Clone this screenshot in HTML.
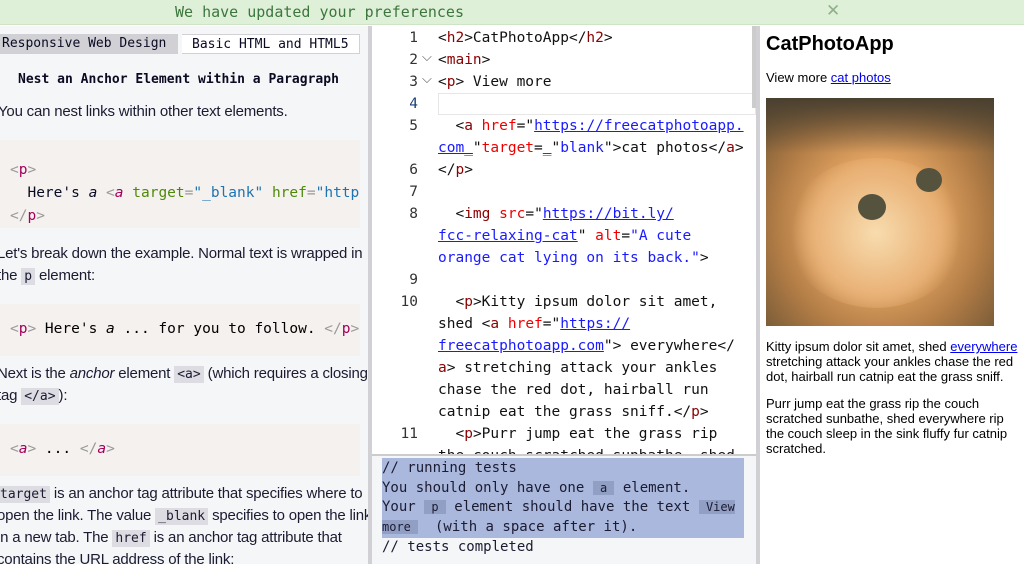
<!DOCTYPE html>
<html><head><meta charset="utf-8"><style>
*{margin:0;padding:0;box-sizing:border-box}
body{width:1024px;height:564px;overflow:hidden;background:#fff;position:relative;font-family:"Liberation Sans",sans-serif}
.abs{position:absolute}
#bar{left:0;top:0;width:1024px;height:25px;background:#dff0d8;border-bottom:1px solid #cfe3c6}
#bar .t{left:175px;top:3px;font:15px "DejaVu Sans Mono",monospace;color:#3c763d}
#bar .x{left:826px;top:1px;font:bold 17px "DejaVu Sans",sans-serif;color:#8fb08a}
#left{left:0;top:26px;width:368px;height:538px;background:#f5f6f7;overflow:hidden}
#sb{left:368px;top:26px;width:4px;height:538px;background:#d0d0d5}
.crumb{top:8px;height:20px;font:13px "DejaVu Sans Mono",monospace;color:#0a0a23;line-height:20px}
.p{font:15px "Liberation Sans",sans-serif;color:#1b1b32;left:0;white-space:nowrap;letter-spacing:-0.2px}
.code{left:0;width:360px;background:#f5f1ee}
.mono{font-family:"DejaVu Sans Mono",monospace}
.ic{background:#dcdce2;font:13px "DejaVu Sans Mono",monospace;padding:1px 3px;letter-spacing:0}
.tag{color:#999}.tn{color:#a3005a}.at{color:#4e8a08}.st{color:#1d74b3}
#ed{left:372px;top:26px;width:384px;height:428px;background:#fff;overflow:hidden}
.ln{position:absolute;left:0;width:46px;text-align:right;font:14.5px "DejaVu Sans Mono",monospace;color:#333;line-height:21.9px}
.cl{position:absolute;left:66px;font:14.5px "DejaVu Sans Mono",monospace;color:#111;white-space:pre;line-height:21.9px}
.r{color:#8b0000}.rd{color:#e00}.b{color:#1a1aff}.u{text-decoration:underline}
#div{left:756px;top:26px;width:4px;height:538px;background:#d0d0d5}
#tests{left:372px;top:454px;width:384px;height:110px;background:#f5f6f7;border-top:2px solid #ccc}
.tl{position:absolute;left:10px;font:14px "DejaVu Sans Mono",monospace;color:#1b1b32;white-space:pre}
.hl{background:#aab8dd}
.ti{background:#929fc4;font-size:12px}
#pv{left:760px;top:26px;width:264px;height:538px;background:#fff}
</style></head><body>
<div id="bar" class="abs"><div class="abs t">We have updated your preferences</div><div class="abs x">✕</div></div>

<div id="left" class="abs">
 <div class="abs crumb" style="left:0;width:178px;background:#d0d0d5;padding-left:2px">Responsive Web Design</div>
 <div class="abs" style="left:170px;top:8px;width:0;height:0;border-top:10px solid transparent;border-bottom:10px solid transparent;border-left:8px solid #d0d0d5"></div>
 <div class="abs crumb" style="left:182px;width:178px;border:1px solid #d0d0d5;border-left:none;padding-left:10px;background:#fff">Basic HTML and HTML5</div>
 <div class="abs mono" style="left:18px;top:46px;font-size:13px;font-weight:bold;color:#0a0a23">Nest an Anchor Element within a Paragraph</div>
 <div class="abs p" style="top:77px;left:-2px">You can nest links within other text elements.</div>
 <div class="abs code" style="top:114px;height:88px"></div>
 <div class="abs mono" style="left:10px;top:133px;font-size:14.5px;line-height:23px;white-space:pre"><span class="tag">&lt;</span><span class="tn">p</span><span class="tag">&gt;</span>
  <span style="color:#0a0a23">Here's <i>a</i></span> <span class="tag">&lt;</span><span class="tn"><i>a</i></span> <span class="at">target</span><span class="tag">=</span><span class="st">"_blank"</span> <span class="at">href</span><span class="tag">=</span><span class="st">"http</span>
<span class="tag">&lt;/</span><span class="tn">p</span><span class="tag">&gt;</span></div>
 <div class="abs p" style="top:219px;left:-3px">Let's break down the example. Normal text is wrapped in</div>
 <div class="abs p" style="top:241px;left:-3px">the <span class="ic">p</span> element:</div>
 <div class="abs code" style="top:278px;height:52px"></div>
 <div class="abs mono" style="left:10px;top:295px;font-size:14.5px;white-space:pre"><span class="tag">&lt;</span><span class="tn">p</span><span class="tag">&gt;</span> Here's <i>a</i> ... for you to follow. <span class="tag">&lt;/</span><span class="tn">p</span><span class="tag">&gt;</span></div>
 <div class="abs p" style="top:339px;left:-3px">Next is the <i>anchor</i> element <span class="ic">&lt;a&gt;</span> (which requires a closing</div>
 <div class="abs p" style="top:361px;left:-3px">tag <span class="ic">&lt;/a&gt;</span>):</div>
 <div class="abs code" style="top:398px;height:52px"></div>
 <div class="abs mono" style="left:10px;top:415px;font-size:14.5px;white-space:pre"><span class="tag">&lt;</span><span class="tn"><i>a</i></span><span class="tag">&gt;</span> ... <span class="tag">&lt;/</span><span class="tn"><i>a</i></span><span class="tag">&gt;</span></div>
 <div class="abs p" style="top:459px;left:-3px"><span class="ic">target</span> is an anchor tag attribute that specifies where to</div>
 <div class="abs p" style="top:481px;left:-3px">open the link. The value <span class="ic">_blank</span> specifies to open the link</div>
 <div class="abs p" style="top:503px;left:-3px">in a new tab. The <span class="ic">href</span> is an anchor tag attribute that</div>
 <div class="abs p" style="top:525px;left:-3px">contains the URL address of the link:</div>
</div>
<div id="sb" class="abs"></div>

<div id="ed" class="abs">
 <div class="ln" style="top:2px">1</div><div class="cl" style="top:2px">&lt;<span class="r">h2</span>&gt;CatPhotoApp&lt;/<span class="r">h2</span>&gt;</div>
 <div class="ln" style="top:24px">2</div><div class="abs" style="left:50px;top:23px;font-size:13px;color:#555">⌵</div><div class="cl" style="top:24px">&lt;<span class="r">main</span>&gt;</div>
 <div class="ln" style="top:46px">3</div><div class="abs" style="left:50px;top:45px;font-size:13px;color:#555">⌵</div><div class="cl" style="top:46px">&lt;<span class="r">p</span>&gt; View more</div>
 <div class="ln" style="top:68px;color:#1a3f7a">4</div><div class="abs" style="left:66px;top:67px;width:318px;height:22px;border:1px solid #e6e6e6"></div>
 <div class="ln" style="top:90px">5</div><div class="cl" style="top:90px">  &lt;<span class="r">a</span> <span class="rd">href</span>="<span class="b u">https://freecatphotoapp.</span>
<span class="b u">com_</span>"<span class="rd">target</span>=<span class="rd u">_</span>"<span class="b">blank</span>"&gt;cat photos&lt;/<span class="r">a</span>&gt;</div>
 <div class="ln" style="top:134px">6</div><div class="cl" style="top:134px">&lt;/<span class="r">p</span>&gt;</div>
 <div class="ln" style="top:156px">7</div>
 <div class="ln" style="top:178px">8</div><div class="cl" style="top:178px">  &lt;<span class="r">img</span> <span class="rd">src</span>="<span class="b u">https://bit.ly/</span>
<span class="b u">fcc-relaxing-cat</span>" <span class="rd">alt</span>=<span class="b">"A cute</span>
<span class="b">orange cat lying on its back."</span>&gt;</div>
 <div class="ln" style="top:244px">9</div>
 <div class="ln" style="top:266px">10</div><div class="cl" style="top:266px">  &lt;<span class="r">p</span>&gt;Kitty ipsum dolor sit amet,
shed &lt;<span class="r">a</span> <span class="rd">href</span>="<span class="b u">https://</span>
<span class="b u">freecatphotoapp.com</span>"&gt; everywhere&lt;/
<span class="r">a</span>&gt; stretching attack your ankles
chase the red dot, hairball run
catnip eat the grass sniff.&lt;/<span class="r">p</span>&gt;</div>
 <div class="ln" style="top:398px">11</div><div class="cl" style="top:398px">  &lt;<span class="r">p</span>&gt;Purr jump eat the grass rip
the couch scratched sunbathe, shed</div>
 <div class="abs" style="right:0;top:0;width:4px;height:82px;background:#ccc"></div>
</div>

<div id="tests" class="abs">
 <div class="abs hl" style="left:10px;top:2px;width:362px;height:80px"></div>
 <div class="tl" style="top:4px">// running tests</div>
 <div class="tl" style="top:24px">You should only have one <span class="ti"> a </span> element.</div>
 <div class="tl" style="top:43px">Your <span class="ti"> p </span> element should have the text <span class="ti"> View</span></div>
 <div class="tl" style="top:63px"><span class="ti">more </span>  (with a space after it).</div>
 <div class="tl" style="top:83px">// tests completed</div>
</div>
<div id="div" class="abs"></div>

<div id="pv" class="abs">
 <div class="abs" style="left:6px;top:7px;font-size:20px;font-weight:bold;color:#000">CatPhotoApp</div>
 <div class="abs" style="left:6px;top:44px;font-size:13px;color:#000">View more <span style="color:#00e;text-decoration:underline">cat photos</span></div>
 <div class="abs" style="left:6px;top:72px;width:228px;height:228px;overflow:hidden;background:radial-gradient(ellipse at 50% 55%,#f3c98f 0%,#e2a462 35%,#b07b45 65%,#6a5334 100%)">
  <div class="abs" style="left:0;top:0;width:228px;height:55px;background:linear-gradient(#4a4030,rgba(74,64,48,0))"></div>
  <div class="abs" style="left:20px;top:60px;width:180px;height:150px;border-radius:50%;background:radial-gradient(circle,#f8dcae 0%,#eab47a 50%,rgba(220,160,100,0) 72%)"></div>
  <div class="abs" style="left:92px;top:96px;width:28px;height:26px;border-radius:50%;background:#55523e"></div>
  <div class="abs" style="left:150px;top:70px;width:26px;height:24px;border-radius:50%;background:#55523e"></div>
 </div>
 <div class="abs" style="left:6px;top:313px;width:262px;font-size:13px;line-height:15px;color:#000">Kitty ipsum dolor sit amet, shed <span style="color:#00e;text-decoration:underline">everywhere</span> stretching attack your ankles chase the red dot, hairball run catnip eat the grass sniff.</div>
 <div class="abs" style="left:6px;top:370px;width:256px;font-size:13px;line-height:15px;color:#000">Purr jump eat the grass rip the couch scratched sunbathe, shed everywhere rip the couch sleep in the sink fluffy fur catnip scratched.</div>
</div>
</body></html>
